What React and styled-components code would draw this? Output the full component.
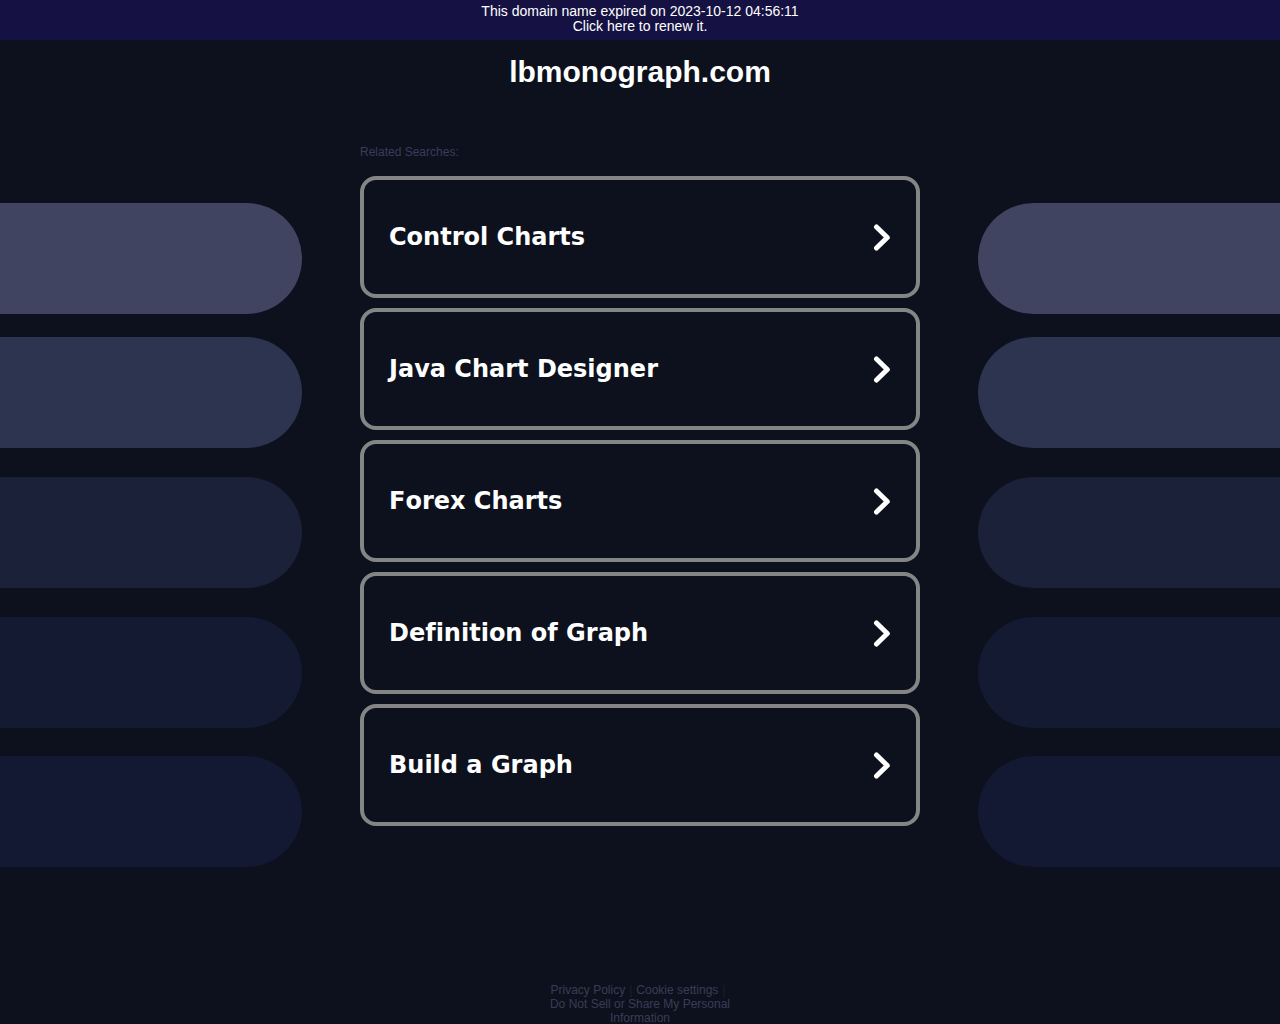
import React from 'react';
import styled, { createGlobalStyle } from 'styled-components';

const GlobalStyle = createGlobalStyle`
  *, *::before, *::after { box-sizing: border-box; }
  body {
    margin: 0;
    background: #0d111d;
    color: #fff;
    font-family: "Liberation Sans", Arial, Helvetica, sans-serif;
  }
  a { color: inherit; text-decoration: none; }
`;

const Page = styled.div`
  display: flex;
  flex-direction: column;
  min-height: 100vh;
`;

const Banner = styled.a`
  display: block;
  padding: 4px 0 6px;
  background: #151243;
  font-size: 14px;
  line-height: 15px;
  text-align: center;
`;

const Title = styled.h1`
  margin: 0;
  padding: 14px 0;
  font-size: 30px;
  line-height: 36px;
  text-align: center;
`;

const Columns = styled.div`
  display: grid;
  grid-template-columns: minmax(0, 1fr) minmax(0, 560px) minmax(0, 1fr);
  column-gap: 58px;
  flex: 1;
`;

const PillColumn = styled.div`
  display: flex;
  flex-direction: column;
  padding-top: 99px;
`;

const Pill = styled.div`
  height: 111px;
  margin-bottom: ${({ $gap }) => $gap}px;
  background: ${({ $color }) => $color};
  border-radius: ${({ $side }) => ($side === 'left' ? '0 56px 56px 0' : '56px 0 0 56px')};
`;

const Center = styled.main`
  display: flex;
  flex-direction: column;
  padding-top: 41px;
`;

const Caption = styled.h2`
  margin: 0 0 17px;
  color: #393c5b;
  font-size: 12px;
  font-weight: 400;
  line-height: 14px;
`;

const Cards = styled.ul`
  display: flex;
  flex-direction: column;
  gap: 10px;
  margin: 0;
  padding: 0;
  list-style: none;
`;

const Card = styled.a`
  display: flex;
  align-items: center;
  justify-content: space-between;
  height: 122px;
  padding: 0 25px;
  border: 4px solid #848685;
  border-radius: 16px;
  font: 700 24px/28px "DejaVu Sans", Verdana, sans-serif;
  font-kerning: none;
  font-variant-ligatures: none;
`;

const Arrow = styled.svg`
  width: 18px;
  height: 28px;
`;

const Footer = styled.footer`
  width: 190px;
  margin: 0 auto;
  padding-top: 157px;
  color: #3a3c56;
  font-size: 12px;
  line-height: 14px;
  text-align: center;
`;

const Separator = styled.span`
  margin: 0 4px;
  color: #1c1f30;
`;

const pills = [
  { color: '#404461', gap: 23 },
  { color: '#2c344f', gap: 29 },
  { color: '#1c213a', gap: 29 },
  { color: '#151a33', gap: 28 },
  { color: '#131932', gap: 0 },
];

const searches = [
  'Control Charts',
  'Java Chart Designer',
  'Forex Charts',
  'Definition of Graph',
  'Build a Graph',
];

function Pills({ side }) {
  return (
    <PillColumn aria-hidden="true">
      {pills.map(({ color, gap }) => (
        <Pill key={color} $color={color} $gap={gap} $side={side} />
      ))}
    </PillColumn>
  );
}

export default function App() {
  return (
    <Page>
      <GlobalStyle />
      <Banner href="#renew">
        This domain name expired on 2023-10-12 04:56:11
        <br />
        Click here to renew it.
      </Banner>
      <Title>lbmonograph.com</Title>
      <Columns>
        <Pills side="left" />
        <Center>
          <Caption>Related Searches:</Caption>
          <Cards>
            {searches.map((label) => (
              <li key={label}>
                <Card href="#search">
                  {label}
                  <Arrow viewBox="0 0 18 28" aria-hidden="true">
                    <path
                      d="M3.5 4 L14.3 14.5 L3.5 25"
                      fill="none"
                      stroke="#fff"
                      strokeWidth="5"
                      strokeLinecap="round"
                      strokeLinejoin="round"
                    />
                  </Arrow>
                </Card>
              </li>
            ))}
          </Cards>
          <Footer>
            <a href="#privacy">Privacy Policy</a>
            <Separator>|</Separator>
            <a href="#cookies">Cookie settings</a>
            <Separator>|</Separator>{' '}
            <a href="#do-not-sell">Do Not Sell or Share My Personal Information</a>
          </Footer>
        </Center>
        <Pills side="right" />
      </Columns>
    </Page>
  );
}
